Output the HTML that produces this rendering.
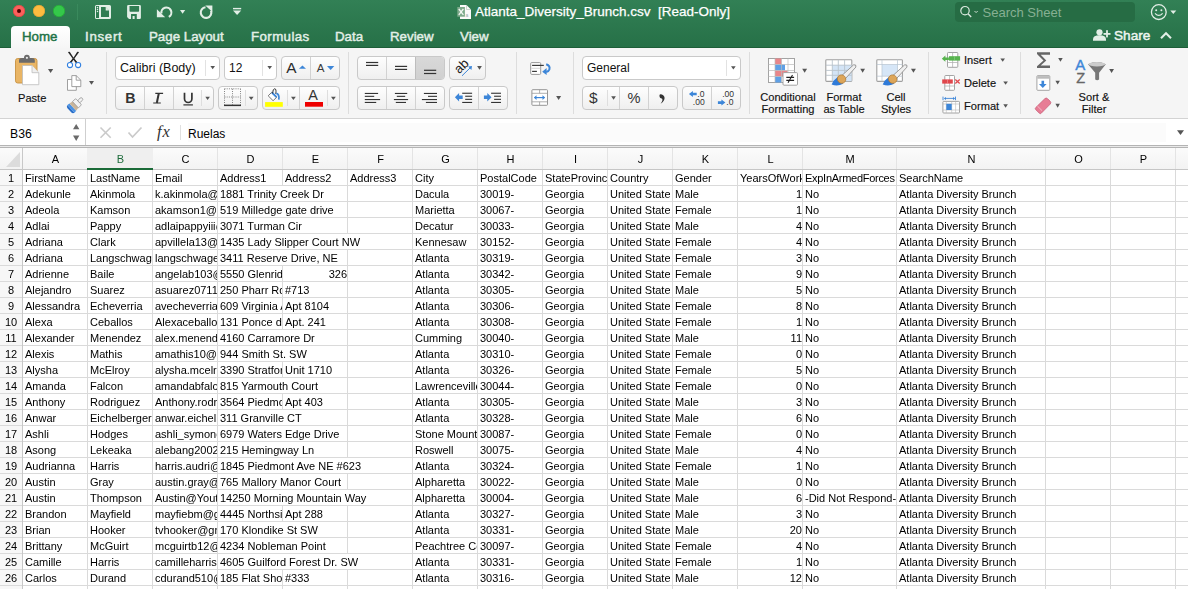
<!DOCTYPE html>
<html><head><meta charset="utf-8">
<style>
*{margin:0;padding:0;box-sizing:border-box}
html,body{width:1188px;height:589px;overflow:hidden;background:#fff;font-family:"Liberation Sans",sans-serif;position:relative}
.abs{position:absolute}
#grid{position:absolute;left:0;top:0;width:1188px;height:589px;will-change:transform}
.c{position:absolute;height:15px;line-height:15px;font-size:11px;color:#000;white-space:nowrap;overflow:hidden;padding-left:2px}
.c.n{text-align:right;padding-left:0;padding-right:0}
.vl{position:absolute;width:1px;background:#dadada}
.hl{position:absolute;left:0;width:1188px;height:1px;background:#dadada}
.rn{position:absolute;left:0;width:22px;height:15px;line-height:15px;font-size:11px;text-align:center;color:#000}
#rhbg{position:absolute;left:0;top:169px;width:22px;height:420px;background:#f7f7f7}
#chbg{position:absolute;left:0;top:148px;width:1188px;height:21px;background:linear-gradient(#fbfbfb,#f3f3f3)}
.ch{position:absolute;top:149px;height:21px;line-height:21px;padding-left:1px;font-size:11px;text-align:center;color:#000}
.ch.sel{color:#1d6b3b}
.chl{position:absolute;top:148px;width:1px;height:21px;background:#e4e4e4}
</style></head><body>
<style>
.tab{position:absolute;top:29px;font-size:13.3px;font-weight:normal;line-height:16px;color:#e3efe7;white-space:nowrap;-webkit-text-stroke:0.45px #e3efe7}
.grp{position:absolute;border:1px solid #c9c9c9;border-radius:4px;background:linear-gradient(#fefefe,#efefef)}
.inp{position:absolute;border:1px solid #c9c9c9;border-radius:4px;background:#fff}
.dv{position:absolute;width:1px;background:#d2d2d2}
.sep{position:absolute;width:1px;background:#dddddd}
.lbl{position:absolute;font-size:11.1px;line-height:11.8px;color:#111;white-space:nowrap;text-align:center;-webkit-text-stroke:0.15px #111}
#ov{position:absolute;left:0;top:0}
</style>
<div class="abs" style="left:0;top:0;width:1188px;height:48px;background:linear-gradient(rgb(50,128,85),rgb(38,112,71))"></div>
<div class="abs" style="left:0;top:47px;width:1188px;height:1px;background:#1d5e38"></div>
<div class="abs" style="left:13px;top:5px;width:12px;height:12px;border-radius:50%;background:#fc605c;box-shadow:inset 0 0 0 0.6px #d64541"></div>
<div class="abs" style="left:17px;top:9px;width:4px;height:4px;border-radius:50%;background:#4d0000"></div>
<div class="abs" style="left:33px;top:5px;width:12px;height:12px;border-radius:50%;background:#fdbc40;box-shadow:inset 0 0 0 0.6px #dc9e32"></div>
<div class="abs" style="left:53px;top:5px;width:12px;height:12px;border-radius:50%;background:#34c84a;box-shadow:inset 0 0 0 0.6px #26a534"></div>
<div class="abs" style="left:77px;top:4px;width:1px;height:16px;background:#3a8a5d"></div>
<div class="abs" style="left:475px;top:4px;font-size:13.5px;line-height:16px;color:#fff;white-space:pre;-webkit-text-stroke:0.25px #fff">Atlanta_Diversity_Brunch.csv  [Read-Only]</div>
<div class="abs" style="left:11px;top:26px;width:59px;height:22px;background:linear-gradient(#fff,#f6f6f6);border-radius:4px 4px 0 0"></div>
<div class="tab" style="left:22px;color:#217346;-webkit-text-stroke:0.45px #217346">Home</div>
<div class="tab" style="left:85px;letter-spacing:0.7px">Insert</div>
<div class="tab" style="left:149px">Page Layout</div>
<div class="tab" style="left:251px;letter-spacing:0.4px">Formulas</div>
<div class="tab" style="left:335px">Data</div>
<div class="tab" style="left:390px">Review</div>
<div class="tab" style="left:460px">View</div>
<div class="abs" style="left:955px;top:2px;width:180px;height:20px;border-radius:4px;background:#266c44"></div>
<div class="abs" style="left:982.5px;top:5px;font-size:13px;line-height:16px;color:#86b093">Search Sheet</div>
<div class="abs" style="left:1114px;top:28px;font-size:13.6px;line-height:16px;color:#eef5f0;-webkit-text-stroke:0.45px #eef5f0">Share</div>

<!-- ribbon body -->
<div class="abs" style="left:0;top:48px;width:1188px;height:70px;background:#f5f5f5"></div>
<div class="abs" style="left:0;top:118px;width:1188px;height:1px;background:#d3d3d3"></div>
<div class="sep" style="left:106px;top:52px;height:62px"></div>
<div class="sep" style="left:348px;top:52px;height:62px"></div>
<div class="sep" style="left:516px;top:52px;height:62px"></div>
<div class="sep" style="left:573px;top:52px;height:62px"></div>
<div class="sep" style="left:749px;top:52px;height:62px"></div>
<div class="sep" style="left:928px;top:52px;height:62px"></div>
<div class="sep" style="left:1020px;top:52px;height:62px"></div>
<div class="lbl" style="left:18px;top:92.5px">Paste</div>

<!-- font group -->
<div class="inp" style="left:115px;top:56px;width:105px;height:24px"></div>
<div class="dv" style="left:205px;top:60px;height:16px;background:#e2e2e2"></div>
<div class="abs" style="left:120px;top:60px;font-size:12.5px;line-height:16px;color:#111">Calibri (Body)</div>
<div class="inp" style="left:224px;top:56px;width:53px;height:24px"></div>
<div class="dv" style="left:262px;top:60px;height:16px;background:#e2e2e2"></div>
<div class="abs" style="left:229px;top:60px;font-size:12px;line-height:16px;color:#111">12</div>
<div class="grp" style="left:281px;top:56px;width:59px;height:24px"></div>
<div class="dv" style="left:310px;top:57px;height:22px"></div>
<div class="grp" style="left:115px;top:86px;width:99px;height:24px"></div>
<div class="dv" style="left:144px;top:87px;height:22px"></div>
<div class="dv" style="left:173px;top:87px;height:22px"></div>
<div class="dv" style="left:201px;top:90px;height:16px;background:#dedede"></div>
<div class="grp" style="left:218px;top:86px;width:40px;height:24px"></div>
<div class="dv" style="left:245px;top:90px;height:16px;background:#dedede"></div>
<div class="grp" style="left:262px;top:86px;width:78px;height:24px"></div>
<div class="dv" style="left:287px;top:90px;height:16px;background:#dedede"></div>
<div class="dv" style="left:299px;top:87px;height:22px"></div>
<div class="dv" style="left:327px;top:90px;height:16px;background:#dedede"></div>

<!-- alignment group -->
<div class="grp" style="left:357px;top:56px;width:88px;height:24px"></div>
<div class="abs" style="left:415px;top:57px;width:29px;height:22px;border-radius:0 3px 3px 0;background:linear-gradient(#d9d9d9,#d0d0d0)"></div>
<div class="dv" style="left:386px;top:57px;height:22px"></div>
<div class="dv" style="left:415px;top:57px;height:22px;background:#bdbdbd"></div>
<div class="grp" style="left:449px;top:56px;width:37px;height:24px"></div>
<div class="grp" style="left:357px;top:86px;width:88px;height:24px"></div>
<div class="dv" style="left:386px;top:87px;height:22px"></div>
<div class="dv" style="left:415px;top:87px;height:22px"></div>
<div class="grp" style="left:449px;top:86px;width:59px;height:24px"></div>
<div class="dv" style="left:478px;top:87px;height:22px"></div>

<!-- number group -->
<div class="inp" style="left:582px;top:56px;width:159px;height:24px"></div>
<div class="dv" style="left:726px;top:60px;height:16px;background:#e2e2e2"></div>
<div class="abs" style="left:587px;top:60px;font-size:12px;line-height:16px;color:#111">General</div>
<div class="grp" style="left:582px;top:86px;width:96px;height:24px"></div>
<div class="dv" style="left:607px;top:90px;height:16px;background:#dedede"></div>
<div class="dv" style="left:619px;top:87px;height:22px"></div>
<div class="dv" style="left:648px;top:87px;height:22px"></div>
<div class="grp" style="left:682px;top:86px;width:59px;height:24px"></div>
<div class="dv" style="left:711px;top:87px;height:22px"></div>

<!-- styles labels -->
<div class="lbl" style="left:747px;top:92px;width:82px">Conditional<br>Formatting</div>
<div class="lbl" style="left:814px;top:92px;width:60px">Format<br>as Table</div>
<div class="lbl" style="left:866px;top:92px;width:60px">Cell<br>Styles</div>
<div class="lbl" style="left:964px;top:55px;text-align:left">Insert</div>
<div class="lbl" style="left:964px;top:78px;text-align:left">Delete</div>
<div class="lbl" style="left:964px;top:101px;text-align:left">Format</div>
<div class="lbl" style="left:1064px;top:92px;width:60px">Sort &amp;<br>Filter</div>

<!-- formula bar -->
<div class="abs" style="left:0;top:119px;width:1188px;height:26px;background:#fff"></div>
<div class="abs" style="left:85px;top:119px;width:1px;height:26px;background:#cfcfcf"></div>
<div class="abs" style="left:188px;top:123px;width:978px;height:19px;background:#fbfbfb"></div>
<div class="abs" style="left:180px;top:125px;width:1px;height:15px;background:#e0e0e0"></div>
<div class="abs" style="left:0;top:145px;width:1188px;height:1px;background:#b4b4b4"></div>
<div class="abs" style="left:0;top:146px;width:1188px;height:1px;background:#e9e9e9"></div>
<div class="abs" style="left:0;top:147px;width:1188px;height:1px;background:#b4b4b4"></div>
<div class="abs" style="left:10px;top:126px;font-size:12.2px;line-height:16px;color:#000">B36</div>
<div class="abs" style="left:188px;top:126px;font-size:12px;line-height:16px;color:#000">Ruelas</div>
<svg id="ov" width="1188" height="148" viewBox="0 0 1188 148">
<!-- ===== title bar icons ===== -->
<g fill="#e2eee6">
 <!-- sidebar -->
 <path fill-rule="evenodd" d="M96.5,5 h13 a1.5,1.5 0 0 1 1.5,1.5 v11 a1.5,1.5 0 0 1 -1.5,1.5 h-13 a1.5,1.5 0 0 1 -1.5,-1.5 v-11 a1.5,1.5 0 0 1 1.5,-1.5z M96,6 v12 h3 v-12z M101,7 v10 h8 v-6.5 l-3.5,-3.5z"/>
 <path d="M105.7,7 v3.6 h3.3z"/>
 <circle cx="97.5" cy="7.6" r="0.75" fill="#e2eee6"/><circle cx="97.5" cy="9.6" r="0.75"/><circle cx="97.5" cy="11.6" r="0.75"/>
 <!-- save -->
 <path fill-rule="evenodd" d="M128.3,5 h11.4 a1.2,1.2 0 0 1 1.2,1.2 v11.6 a1.2,1.2 0 0 1 -1.2,1.2 h-10.7 l-1.9,-1.9 v-10.9 a1.2,1.2 0 0 1 1.2,-1.2z M129.5,6 v5 a0.8,0.8 0 0 0 0.8,0.8 h8 a0.8,0.8 0 0 0 0.8,-0.8 v-5z M131,14 v5 h5.8 v-5z"/>
 <rect x="132.6" y="16" width="2" height="3"/>
 <!-- undo -->
 <path d="M156.9,9.2 v8 h8.3z"/>
 <path fill="none" stroke="#e2eee6" stroke-width="2.1" d="M161.5,13.6 A5,5 0 1 1 168.8,16.9"/>
 <path d="M180,10 h5.2 l-2.6,3.8z"/>
 <!-- redo -->
 <path fill="none" stroke="#e2eee6" stroke-width="2.1" d="M205.5,7.3 A5.3,5.3 0 1 0 211,10.7"/>
 <path d="M205.3,5.6 h7.1 v6.4z"/>
 <!-- customize -->
 <rect x="233" y="7.9" width="8.2" height="1.4"/>
 <path d="M233,10.4 h8.2 l-4.1,4.6z"/>
 <!-- search magnifier -->
 <circle cx="965" cy="10.7" r="4.2" fill="none" stroke="#dbe9df" stroke-width="1.2"/>
 <path d="M968,13.8 l3.2,3.2" stroke="#dbe9df" stroke-width="1.4"/>
 <path d="M974.5,11 l1.6,1.6 l1.6,-1.6" fill="none" stroke="#dbe9df" stroke-width="0.9"/>
 <!-- smiley -->
 <circle cx="1158.8" cy="12.1" r="7.4" fill="none" stroke="#e2eee6" stroke-width="1.3"/>
 <circle cx="1156.2" cy="10.3" r="1"/><circle cx="1161.4" cy="10.3" r="1"/>
 <path d="M1155,13.3 q3.8,4.2 7.6,0" fill="none" stroke="#e2eee6" stroke-width="1.2"/>
 <path d="M1170.3,10.5 h6 l-3,3.5z"/>
 <!-- share person -->
 <circle cx="1099.5" cy="32.3" r="3.1"/>
 <path d="M1093,40.8 v-1.6 q0,-4 6.5,-4 q6.5,0 6.5,4 v1.6z"/>
 <rect x="1103.5" y="33" width="7" height="1.8"/><rect x="1106.1" y="30.2" width="1.8" height="7.2"/>
 <path d="M1161,38.2 L1166,33.2 L1171,38.2" fill="none" stroke="#e2eee6" stroke-width="2"/>
</g>
<!-- doc icon -->
<path d="M460,5 h6.5 l4.5,4.5 v9.5 h-11z" fill="#fafafa"/>
<path d="M466.5,5 v4.5 h4.5" fill="none" stroke="#b8c4bc" stroke-width="0.7"/>
<rect x="457.3" y="7" width="7.6" height="9.7" fill="#7daa8b"/>
<path d="M458.8,9 l4.6,5.8 M463.4,9 l-4.6,5.8" stroke="#f2f7f3" stroke-width="1.3"/>
<text x="465.6" y="16.5" font-size="5" fill="#9aa" font-family="Liberation Sans">a</text>

<!-- ===== clipboard ===== -->
<rect x="15.5" y="58.5" width="21.5" height="24.5" rx="2.2" fill="#e9b565" stroke="#c7913f" stroke-width="0.9"/>
<path d="M19,62.7 v-2.3 q0,-2.4 3,-2.4 h2 q0,-3.2 2.9,-3.2 q2.9,0 2.9,3.2 h2 q3,0 3,2.4 v2.3z" fill="#6b6b6b"/>
<circle cx="26.9" cy="57.8" r="1.1" fill="#e9e9e9"/>
<path d="M22.5,65.5 h9.5 l6.8,7.2 v12 h-16.3z" fill="#fff" stroke="#bdbdbd" stroke-width="0.8"/>
<path d="M32,65.5 v7.2 h6.8" fill="#f0f0f0" stroke="#bdbdbd" stroke-width="0.8"/>
<path d="M48,69 h5.2 l-2.6,4z" fill="#555"/>
<!-- scissors -->
<path d="M68.4,52.3 L69.5,52 Q72.5,57.5 77.1,62.3 L76.2,63z M78.6,52.3 L77.5,52 Q74.5,57.5 69.9,62.3 L70.8,63z" fill="#111" stroke="#111" stroke-width="0.6"/>
<circle cx="70" cy="65" r="2.6" fill="#fff" stroke="#2f7fe0" stroke-width="1.05"/>
<circle cx="78.1" cy="65" r="2.6" fill="#fff" stroke="#2f7fe0" stroke-width="1.05"/>
<!-- copy -->
<path d="M67.5,79.5 h5.5 v0 l0,0 h0 v0 h3.3 v10.8 h-8.8z" fill="#fff" stroke="#8f8f8f" stroke-width="0.85"/>
<path d="M71.8,75.6 h4.4 l4.6,4.6 v6.4 h-9z" fill="#fff" stroke="#8f8f8f" stroke-width="0.85"/>
<path d="M76.2,75.6 v4.6 h4.6" fill="none" stroke="#8f8f8f" stroke-width="0.85"/>
<path d="M89,81 h5 l-2.5,3.7z" fill="#555"/>
<!-- painter -->
<g transform="translate(70.6,109.2) rotate(47)">
 <path d="M-5.3,-0.6 L5.3,-0.6 q-0.6,2.2 -2.4,2.2 h-5.8 q-1.8,0 -2.4,-2.2z" fill="#2a6fc9"/>
 <path d="M-5.3,-0.6 L5.3,-0.6 L4.9,-3 L-4.9,-3z" fill="#4a92e4"/>
 <path d="M-4.9,-3 L4.9,-3 L4.3,-6.6 L-4.3,-6.6z" fill="#c9b59a"/>
 <path d="M-4.3,-6.6 h8.6 v-3.4 q0,-1 -1,-1 h-6.6 q-1,0 -1,1z" fill="#f3f3f3" stroke="#8c8c8c" stroke-width="0.7"/>
 <rect x="-1.6" y="-16" width="3.2" height="5.2" rx="1.6" fill="#f3f3f3" stroke="#8c8c8c" stroke-width="0.7"/>
</g>
<!-- ===== font group ===== -->
<g fill="#555">
 <path d="M210.4,66 h4.6 l-2.3,3.2z"/>
 <path d="M267.4,66 h4.6 l-2.3,3.2z"/>
 <path d="M205.3,96.7 h4.6 l-2.3,3.2z"/>
 <path d="M248.8,96.7 h4.8 l-2.4,3.2z"/>
 <path d="M291,96.7 h4.8 l-2.4,3.2z"/>
 <path d="M331,96.7 h4.8 l-2.4,3.2z"/>
</g>
<text x="286.2" y="73" font-size="15.4" fill="#2b2b2b" font-family="Liberation Sans">A</text>
<path d="M298.9,68.7 l3.55,-3.1 l3.55,3.1z" fill="#3d86d8"/>
<text x="316.7" y="71.8" font-size="11.6" fill="#3a3a3a" font-family="Liberation Sans">A</text>
<path d="M327,66 h7.3 l-3.65,4z" fill="#3d86d8"/>
<text x="125.2" y="103" font-size="14.2" font-weight="bold" fill="#333" font-family="Liberation Sans">B</text>
<path d="M155.3,93.3 h7.8 M153.2,103 h7.6" stroke="#333" stroke-width="1.2"/>
<path d="M158.8,93.3 L156.8,103" stroke="#333" stroke-width="2"/>
<path d="M184.5,92.8 v6 a3.7,3.7 0 0 0 7.4,0 v-6" fill="none" stroke="#333" stroke-width="1.7"/>
<rect x="183.4" y="104.3" width="9.5" height="1.2" fill="#333"/>
<!-- borders -->
<g fill="none" stroke="#777" stroke-width="0.9" stroke-dasharray="1,1.2">
 <path d="M224.5,88.8 h16 M224.5,88.8 v16 M240.5,88.8 v16 M224.5,97 h16 M232.5,88.8 v16"/>
</g>
<rect x="224" y="104.6" width="17" height="1.5" fill="#333"/>
<!-- fill color -->
<rect x="265.1" y="102.1" width="17.7" height="4.7" fill="#ffff00"/>
<path d="M268.2,95.8 L271.8,92.2 L276.8,97.1 L273.1,100.7z" fill="#fff" stroke="#666" stroke-width="0.9"/>
<path d="M271.9,92.5 L276.5,97.1" stroke="#3d86d8" stroke-width="1.8"/>
<path d="M272.6,93.4 q0.2,-4.8 2.2,-4.7 q1.7,0.2 1,5.3" fill="none" stroke="#222" stroke-width="0.9"/>
<path d="M276.3,93.3 q3.3,0.8 2.5,6.4" fill="none" stroke="#3d86d8" stroke-width="1.7"/>
<!-- font color -->
<text x="308.2" y="99.7" font-size="14.4" fill="#333" font-family="Liberation Sans">A</text>
<rect x="305" y="102" width="18" height="4.7" fill="#ee0000"/>

<!-- ===== alignment ===== -->
<g fill="#333">
 <rect x="366" y="61.9" width="12.2" height="1.2"/><rect x="366" y="64.8" width="12.2" height="1.2"/>
 <rect x="395" y="65.8" width="12.1" height="1.2"/><rect x="395" y="68.8" width="12.1" height="1.2"/>
 <rect x="424" y="69.7" width="12.2" height="1.2"/><rect x="424" y="72.9" width="12.2" height="1.2"/>
 <rect x="364.8" y="92.9" width="13.3" height="1.1"/><rect x="364.8" y="95.8" width="9.4" height="1.1"/><rect x="364.8" y="99" width="15.3" height="1.1"/><rect x="364.8" y="101.9" width="11.4" height="1.1"/>
 <rect x="394.9" y="92.9" width="12.3" height="1.1"/><rect x="396.8" y="95.8" width="8.4" height="1.1"/><rect x="393.9" y="99" width="14.2" height="1.1"/><rect x="395.8" y="101.9" width="10.2" height="1.1"/>
 <rect x="423.9" y="92.9" width="13.1" height="1.1"/><rect x="428" y="95.8" width="9" height="1.1"/><rect x="421.9" y="99" width="15.1" height="1.1"/><rect x="425.9" y="101.9" width="11.1" height="1.1"/>
</g>
<!-- orientation -->
<text x="0" y="0" font-size="13" fill="#222" font-family="Liberation Sans" transform="translate(459.3,74.3) rotate(-45)">ab</text>
<path d="M462,75.8 L470.6,67.4" stroke="#3d86d8" stroke-width="1"/>
<path d="M472,66 l-3.9,0.6 l3.3,3.3z" fill="#3d86d8"/>
<path d="M477.1,66.1 h4.8 l-2.4,3.6z" fill="#555"/>
<!-- indent -->
<path d="M454.9,97.2 l4.2,-4.3 v2.6 h3.6 v3.4 h-3.6 v2.6z" fill="#3d86d8"/>
<g fill="#333"><rect x="462.2" y="92.7" width="9.9" height="1.1"/><rect x="465.2" y="95.7" width="6.9" height="1.1"/><rect x="465.2" y="98.8" width="6.9" height="1.1"/><rect x="462.2" y="101.9" width="9.9" height="1.1"/></g>
<path d="M491.5,97.2 l-4.2,-4.3 v2.6 h-3.4 v3.4 h3.4 v2.6z" fill="#3d86d8"/>
<g fill="#333"><rect x="491.1" y="92.7" width="9.9" height="1.1"/><rect x="494.1" y="95.7" width="6.9" height="1.1"/><rect x="494.1" y="98.8" width="6.9" height="1.1"/><rect x="491.1" y="101.9" width="9.9" height="1.1"/></g>
<!-- wrap -->
<rect x="530.7" y="62.6" width="10" height="11.8" rx="1" fill="#fff" stroke="#999" stroke-width="1"/>
<rect x="531.2" y="67.8" width="9" height="0.9" fill="#cfcfcf"/>
<rect x="532.1" y="64.8" width="11.7" height="1.2" fill="#3a3a3a"/>
<rect x="532.1" y="70.8" width="4.8" height="1.2" fill="#3a3a3a"/>
<path d="M546.2,64.3 q4.2,1.6 3.2,5 q-0.8,2.2 -3.2,2.6" fill="none" stroke="#3d86d8" stroke-width="2"/>
<path d="M542.2,71.7 l4.4,-3.6 v7z" fill="#3d86d8"/>
<!-- merge -->
<rect x="531.9" y="89.7" width="15.6" height="15.6" rx="0.8" fill="#fff" stroke="#8a8a8a" stroke-width="0.9"/>
<path d="M531.9,93.3 h15.6 M531.9,101.8 h15.6 M539.6,89.7 v3.6 M539.6,101.8 v3.5" stroke="#9a9a9a" stroke-width="0.8"/>
<path d="M534.5,97.6 h10" stroke="#3d86d8" stroke-width="1.2"/>
<path d="M533.9,97.6 l2.6,-2.4 v4.8z M545.1,97.6 l-2.6,-2.4 v4.8z" fill="#3d86d8"/>
<path d="M556.1,95.9 h5 l-2.5,4z" fill="#555"/>

<!-- ===== number ===== -->
<path d="M731,66.2 h4.7 l-2.35,3.3z" fill="#555"/>
<path d="M611.2,96.3 h4.7 l-2.35,3.5z" fill="#555"/>
<text x="589" y="103.2" font-size="15.5" fill="#333" font-family="Liberation Sans">$</text>
<text x="627.4" y="103.4" font-size="14.6" fill="#333" font-family="Liberation Sans">%</text>
<path d="M660.4,94.2 C664.8,94.4 667,99.6 660.6,103.7 C663.2,100.2 662.8,98.7 661,98.2 C659.2,97.6 659,94.3 660.4,94.2Z" fill="#333"/>
<path d="M688.9,94 l4,-3 v1.7 h3.8 v2.6 h-3.8 v1.7z" fill="#3d86d8"/>
<text x="697.3" y="97" font-size="8.6" fill="#333" font-family="Liberation Sans">.0</text>
<text x="692.8" y="104.8" font-size="8.6" fill="#333" font-family="Liberation Sans">.00</text>
<text x="722.2" y="97" font-size="8.6" fill="#333" font-family="Liberation Sans">.00</text>
<path d="M725.4,102.6 l-4,-3 v1.7 h-3.5 v2.6 h3.5 v1.7z" fill="#3d86d8"/>
<text x="726.3" y="104.8" font-size="8.6" fill="#333" font-family="Liberation Sans">.0</text>

<!-- ===== styles ===== -->
<g>
 <rect x="768.5" y="58.5" width="26" height="24" fill="#fff" stroke="#9a9a9a" stroke-width="0.9"/>
 <rect x="775" y="58.5" width="6.5" height="6" fill="#e8868a"/>
 <rect x="775" y="64.5" width="10" height="6" fill="#5ea0e6"/>
 <rect x="775" y="70.5" width="12.6" height="6" fill="#e8868a"/>
 <rect x="775" y="76.5" width="6.5" height="6" fill="#5ea0e6"/>
 <path d="M775,58.5 v24 M781.5,58.5 v24 M788,58.5 v24 M768.5,64.5 h26 M768.5,70.5 h26 M768.5,76.5 h26" stroke="#bbb" stroke-width="0.7"/>
 <rect x="783" y="72.6" width="14.5" height="12.6" rx="1" fill="#fff" stroke="#9a9a9a" stroke-width="0.9"/>
 <path d="M786.3,77.4 h7.8 M786.3,80.4 h7.8 M792.5,75 L788,82.8" stroke="#222" stroke-width="1.1"/>
 <path d="M802.2,68.8 h4.9 l-2.45,4z" fill="#555"/>
</g>
<g>
 <rect x="825.8" y="59.8" width="26" height="21.6" rx="0.8" fill="#fff" stroke="#a0a0a0" stroke-width="1.1"/>
 <rect x="832.3" y="65.2" width="19.3" height="16" fill="#d3e4f6"/>
 <path d="M832.3,59.8 v21.6 M838.3,59.8 v21.6 M844.6,59.8 v21.6 M825.8,65.2 h26 M825.8,70.4 h26 M825.8,75.3 h26" stroke="#b9c3cc" stroke-width="0.9"/>
 <g transform="translate(841.6,79.1) rotate(45)">
  <path d="M-2.4,-2 L-1.6,-18.6 q1.6,-2.6 3.2,0 L2.4,-2z" fill="#efefef" stroke="#8a8a8a" stroke-width="0.8"/>
  <path d="M-4.3,1.2 Q-5.2,7 -3.3,10.8 Q2.5,8.5 4.4,2.2z" fill="#2f7ad8"/>
  <ellipse cx="0" cy="0" rx="4.3" ry="4.1" fill="#dda65a" stroke="#b27b32" stroke-width="0.7"/>
 </g>
 <path d="M860.3,68.8 h4.7 l-2.35,4z" fill="#555"/>
</g>
<g>
 <rect x="876.8" y="59.8" width="25.6" height="21.6" rx="0.8" fill="#fff" stroke="#a0a0a0" stroke-width="1.1"/>
 <rect x="882" y="64.5" width="15.5" height="11.7" fill="#d6e6f7"/>
 <path d="M882,59.5 v22 M897.5,59.5 v22 M876.5,64.5 h26 M876.5,76.2 h26" stroke="#b8c4d0" stroke-width="0.7"/>
 <g transform="translate(892.7,79.1) rotate(45)">
  <path d="M-2.4,-2 L-1.6,-18.6 q1.6,-2.6 3.2,0 L2.4,-2z" fill="#efefef" stroke="#8a8a8a" stroke-width="0.8"/>
  <path d="M-4.3,1.2 Q-5.2,7 -3.3,10.8 Q2.5,8.5 4.4,2.2z" fill="#2f7ad8"/>
  <ellipse cx="0" cy="0" rx="4.3" ry="4.1" fill="#dda65a" stroke="#b27b32" stroke-width="0.7"/>
 </g>
 <path d="M911,68.8 h4.9 l-2.45,4z" fill="#555"/>
</g>

<!-- ===== cells ===== -->
<g>
 <rect x="947.5" y="52.5" width="10.3" height="14.8" rx="0.8" fill="#fff" stroke="#9a9a9a" stroke-width="0.9"/>
 <path d="M952.6,52.5 v14.8 M947.5,62.5 h10.3" stroke="#aaa" stroke-width="0.7"/>
 <rect x="948.9" y="56.2" width="11.2" height="4.4" fill="#57b34e"/>
 <path d="M954.5,56.2 v4.4" stroke="#8fd08a" stroke-width="0.6"/>
 <path d="M941.8,58.7 l3.6,-3.1 v1.8 h3.5 v2.6 h-3.5 v1.8z" fill="#57b34e"/>
 <path d="M1000.4,58.4 h4.6 l-2.3,3.4z" fill="#555"/>
</g>
<g>
 <rect x="944.8" y="75.5" width="9.7" height="14.8" rx="0.8" fill="#fff" stroke="#9a9a9a" stroke-width="0.9"/>
 <path d="M949.6,75.5 v14.8 M944.8,86 h9.7" stroke="#aaa" stroke-width="0.7"/>
 <rect x="942.2" y="79.4" width="10.6" height="4.2" fill="#e0474c"/>
 <path d="M947.5,79.4 v4.2" stroke="#f09a9d" stroke-width="0.6"/>
 <path d="M955.3,79.6 l4.4,4 M959.7,79.6 l-4.4,4" stroke="#e0474c" stroke-width="1.3"/>
 <path d="M1003.3,81.4 h4.6 l-2.3,3.3z" fill="#555"/>
</g>
<g>
 <rect x="942.9" y="101.4" width="16.6" height="11.6" rx="0.8" fill="#fff" stroke="#9a9a9a" stroke-width="0.9"/>
 <path d="M946.3,101.4 v11.6 M951.7,101.4 v11.6 M955.6,101.4 v11.6 M942.9,104 h16.6 M942.9,110 h16.6" stroke="#bbb" stroke-width="0.6"/>
 <rect x="946.3" y="103.8" width="5.4" height="6.2" fill="#3d86d8"/>
 <path d="M944.5,98.4 h10" stroke="#3d86d8" stroke-width="0.9"/>
 <path d="M943,96.6 v3.6 M955.5,96.6 v3.6" stroke="#3d86d8" stroke-width="0.9"/>
 <path d="M944,98.4 l2,-1.5 v3z M955,98.4 l-2,-1.5 v3z" fill="#3d86d8"/>
 <path d="M1003.3,104.3 h4.6 l-2.3,3.4z" fill="#555"/>
</g>

<!-- ===== editing ===== -->
<path d="M1037,52.2 h13 v2.5 h-9.3 l5.6,5.9 l-5.6,5 h9.3 v2.3 h-13 v-1.7 l6.5,-5.6 l-6.5,-6.6z" fill="#666"/>
<path d="M1058.2,58 h4.5 l-2.25,3.8z" fill="#555"/>
<rect x="1036.9" y="75.7" width="12.9" height="14.6" rx="0.8" fill="#fff" stroke="#9a9a9a" stroke-width="0.9"/>
<rect x="1037.3" y="76.1" width="12.1" height="2.6" fill="#bbb"/>
<path d="M1041.5,80.8 h2.6 v3.3 h2.5 l-3.8,3.9 l-3.8,-3.9 h2.5z" fill="#3d86d8"/>
<path d="M1055.4,80.8 h4.5 l-2.25,3.7z" fill="#555"/>
<path d="M1035.8,107.5 l9,-8.8 a2,2 0 0 1 2.8,0 l2.6,2.6 a2,2 0 0 1 0,2.8 l-8.8,9 a1.5,1.5 0 0 1 -2.2,0 l-3.4,-3.4 a1.5,1.5 0 0 1 0,-2.2z" fill="#e77d95" stroke="#c45470" stroke-width="0.7"/>
<path d="M1037.4,106 l4.6,4.6" stroke="#f5c2cf" stroke-width="0.9"/>
<path d="M1055.4,103.8 h4.5 l-2.25,3.9z" fill="#555"/>
<text x="1075.2" y="69.6" font-size="15" fill="#3d86d8" font-family="Liberation Sans" stroke="#3d86d8" stroke-width="0.4">A</text>
<text x="1076.3" y="82.5" font-size="14.6" fill="#666" font-family="Liberation Sans" stroke="#666" stroke-width="0.3">Z</text>
<path d="M1088,64.3 q8.9,-4.5 17.8,0 l-6.7,8.5 v6.8 q-1.9,1.2 -3.9,0 v-6.8z" fill="#777"/>
<ellipse cx="1096.9" cy="64.2" rx="8.4" ry="2.2" fill="#ccc"/>
<path d="M1109.2,69 h4.8 l-2.4,4z" fill="#555"/>

<!-- ===== formula bar ===== -->
<path d="M73,129.3 l3.2,-5.4 l3.2,5.4z M73,135.6 h6.4 l-3.2,5.4z" fill="#6a6a6a"/>
<path d="M100.5,127.5 l10.2,10.2 M110.7,127.5 l-10.2,10.2" stroke="#cacaca" stroke-width="1.6"/>
<path d="M128.5,132.5 l4,4.5 l9,-9.5" fill="none" stroke="#cacaca" stroke-width="1.7"/>
<text x="157" y="137.2" font-size="16.5" font-style="italic" fill="#333" font-family="Liberation Serif" letter-spacing="0.8">fx</text>
<path d="M1177,130.2 h7 l-3.5,4.8z" fill="#555"/>
</svg>

<div id="grid">
<div id="chbg"></div>
<div id="rhbg"></div>
<div class="vl" style="left:22px;top:169px;height:432px"></div><div class="vl" style="left:87px;top:169px;height:432px"></div><div class="vl" style="left:152px;top:169px;height:432px"></div><div class="vl" style="left:217px;top:169px;height:432px"></div><div class="vl" style="left:282px;top:169px;height:16px"></div><div class="vl" style="left:282px;top:265px;height:64px"></div><div class="vl" style="left:282px;top:361px;height:16px"></div><div class="vl" style="left:282px;top:393px;height:16px"></div><div class="vl" style="left:282px;top:505px;height:16px"></div><div class="vl" style="left:282px;top:569px;height:32px"></div><div class="vl" style="left:347px;top:169px;height:64px"></div><div class="vl" style="left:347px;top:249px;height:208px"></div><div class="vl" style="left:347px;top:473px;height:16px"></div><div class="vl" style="left:347px;top:505px;height:48px"></div><div class="vl" style="left:347px;top:569px;height:32px"></div><div class="vl" style="left:412px;top:169px;height:432px"></div><div class="vl" style="left:477px;top:169px;height:432px"></div><div class="vl" style="left:542px;top:169px;height:432px"></div><div class="vl" style="left:607px;top:169px;height:432px"></div><div class="vl" style="left:672px;top:169px;height:432px"></div><div class="vl" style="left:737px;top:169px;height:432px"></div><div class="vl" style="left:802px;top:169px;height:432px"></div><div class="vl" style="left:896px;top:169px;height:432px"></div><div class="vl" style="left:1045px;top:169px;height:432px"></div><div class="vl" style="left:1110px;top:169px;height:432px"></div><div class="vl" style="left:1175px;top:169px;height:432px"></div><div class="hl" style="top:185px"></div><div class="hl" style="top:201px"></div><div class="hl" style="top:217px"></div><div class="hl" style="top:233px"></div><div class="hl" style="top:249px"></div><div class="hl" style="top:265px"></div><div class="hl" style="top:281px"></div><div class="hl" style="top:297px"></div><div class="hl" style="top:313px"></div><div class="hl" style="top:329px"></div><div class="hl" style="top:345px"></div><div class="hl" style="top:361px"></div><div class="hl" style="top:377px"></div><div class="hl" style="top:393px"></div><div class="hl" style="top:409px"></div><div class="hl" style="top:425px"></div><div class="hl" style="top:441px"></div><div class="hl" style="top:457px"></div><div class="hl" style="top:473px"></div><div class="hl" style="top:489px"></div><div class="hl" style="top:505px"></div><div class="hl" style="top:521px"></div><div class="hl" style="top:537px"></div><div class="hl" style="top:553px"></div><div class="hl" style="top:569px"></div><div class="hl" style="top:585px"></div><div class="hl" style="top:601px"></div>
<div class="abs" style="left:0;top:169px;width:1188px;height:1px;background:#c6c6c6"></div>
<div class="abs" style="left:22px;top:148px;width:1px;height:441px;background:#c8c8c8"></div>
<div class="chl" style="left:87px"></div><div class="ch" style="left:23px;width:64px">A</div><div class="chl" style="left:152px"></div><div class="abs" style="left:87px;top:148px;width:66px;height:22px;background:#efefef;border-bottom:2px solid #1b6b38"></div><div class="ch sel" style="left:88px;width:64px">B</div><div class="chl" style="left:217px"></div><div class="ch" style="left:153px;width:64px">C</div><div class="chl" style="left:282px"></div><div class="ch" style="left:218px;width:64px">D</div><div class="chl" style="left:347px"></div><div class="ch" style="left:283px;width:64px">E</div><div class="chl" style="left:412px"></div><div class="ch" style="left:348px;width:64px">F</div><div class="chl" style="left:477px"></div><div class="ch" style="left:413px;width:64px">G</div><div class="chl" style="left:542px"></div><div class="ch" style="left:478px;width:64px">H</div><div class="chl" style="left:607px"></div><div class="ch" style="left:543px;width:64px">I</div><div class="chl" style="left:672px"></div><div class="ch" style="left:608px;width:64px">J</div><div class="chl" style="left:737px"></div><div class="ch" style="left:673px;width:64px">K</div><div class="chl" style="left:802px"></div><div class="ch" style="left:738px;width:64px">L</div><div class="chl" style="left:896px"></div><div class="ch" style="left:803px;width:93px">M</div><div class="chl" style="left:1045px"></div><div class="ch" style="left:897px;width:148px">N</div><div class="chl" style="left:1110px"></div><div class="ch" style="left:1046px;width:64px">O</div><div class="chl" style="left:1175px"></div><div class="ch" style="left:1111px;width:64px">P</div><div class="chl" style="left:1240px"></div><div class="ch" style="left:1176px;width:64px">Q</div>
<div class="rn" style="top:171px">1</div><div class="rn" style="top:187px">2</div><div class="rn" style="top:203px">3</div><div class="rn" style="top:219px">4</div><div class="rn" style="top:235px">5</div><div class="rn" style="top:251px">6</div><div class="rn" style="top:267px">7</div><div class="rn" style="top:283px">8</div><div class="rn" style="top:299px">9</div><div class="rn" style="top:315px">10</div><div class="rn" style="top:331px">11</div><div class="rn" style="top:347px">12</div><div class="rn" style="top:363px">13</div><div class="rn" style="top:379px">14</div><div class="rn" style="top:395px">15</div><div class="rn" style="top:411px">16</div><div class="rn" style="top:427px">17</div><div class="rn" style="top:443px">18</div><div class="rn" style="top:459px">19</div><div class="rn" style="top:475px">20</div><div class="rn" style="top:491px">21</div><div class="rn" style="top:507px">22</div><div class="rn" style="top:523px">23</div><div class="rn" style="top:539px">24</div><div class="rn" style="top:555px">25</div><div class="rn" style="top:571px">26</div><div class="rn" style="top:587px">27</div>
<div class="c" style="left:23px;top:171px;width:64px">FirstName</div><div class="c" style="left:88px;top:171px;width:64px">LastName</div><div class="c" style="left:153px;top:171px;width:64px">Email</div><div class="c" style="left:218px;top:171px;width:64px">Address1</div><div class="c" style="left:283px;top:171px;width:64px">Address2</div><div class="c" style="left:348px;top:171px;width:64px">Address3</div><div class="c" style="left:413px;top:171px;width:64px">City</div><div class="c" style="left:478px;top:171px;width:64px">PostalCode</div><div class="c" style="left:543px;top:171px;width:64px">StateProvince</div><div class="c" style="left:608px;top:171px;width:64px">Country</div><div class="c" style="left:673px;top:171px;width:64px">Gender</div><div class="c" style="left:738px;top:171px;width:64px">YearsOfWork</div><div class="c" style="left:803px;top:171px;width:93px;letter-spacing:-0.28px">ExpInArmedForces</div><div class="c" style="left:897px;top:171px;width:148px">SearchName</div><div class="c" style="left:23px;top:187px;width:64px">Adekunle</div><div class="c" style="left:88px;top:187px;width:64px">Akinmola</div><div class="c" style="left:153px;top:187px;width:64px">k.akinmola@gmail.com</div><div class="c" style="left:218px;top:187px;width:129px">1881 Trinity Creek Dr</div><div class="c" style="left:413px;top:187px;width:64px">Dacula</div><div class="c" style="left:478px;top:187px;width:64px">30019-</div><div class="c" style="left:543px;top:187px;width:64px">Georgia</div><div class="c" style="left:608px;top:187px;width:62px">United States</div><div class="c" style="left:673px;top:187px;width:64px">Male</div><div class="c n" style="left:738px;top:187px;width:64px">1</div><div class="c" style="left:803px;top:187px;width:93px">No</div><div class="c" style="left:897px;top:187px;width:148px">Atlanta Diversity Brunch</div><div class="c" style="left:23px;top:203px;width:64px">Adeola</div><div class="c" style="left:88px;top:203px;width:64px">Kamson</div><div class="c" style="left:153px;top:203px;width:64px">akamson1@yahoo.com</div><div class="c" style="left:218px;top:203px;width:129px">519 Milledge gate drive</div><div class="c" style="left:413px;top:203px;width:64px">Marietta</div><div class="c" style="left:478px;top:203px;width:64px">30067-</div><div class="c" style="left:543px;top:203px;width:64px">Georgia</div><div class="c" style="left:608px;top:203px;width:62px">United States</div><div class="c" style="left:673px;top:203px;width:64px">Female</div><div class="c n" style="left:738px;top:203px;width:64px">1</div><div class="c" style="left:803px;top:203px;width:93px">No</div><div class="c" style="left:897px;top:203px;width:148px">Atlanta Diversity Brunch</div><div class="c" style="left:23px;top:219px;width:64px">Adlai</div><div class="c" style="left:88px;top:219px;width:64px">Pappy</div><div class="c" style="left:153px;top:219px;width:64px">adlaipappyiii@gmail.com</div><div class="c" style="left:218px;top:219px;width:129px">3071 Turman Cir</div><div class="c" style="left:413px;top:219px;width:64px">Decatur</div><div class="c" style="left:478px;top:219px;width:64px">30033-</div><div class="c" style="left:543px;top:219px;width:64px">Georgia</div><div class="c" style="left:608px;top:219px;width:62px">United States</div><div class="c" style="left:673px;top:219px;width:64px">Male</div><div class="c n" style="left:738px;top:219px;width:64px">4</div><div class="c" style="left:803px;top:219px;width:93px">No</div><div class="c" style="left:897px;top:219px;width:148px">Atlanta Diversity Brunch</div><div class="c" style="left:23px;top:235px;width:64px">Adriana</div><div class="c" style="left:88px;top:235px;width:64px">Clark</div><div class="c" style="left:153px;top:235px;width:64px">apvillela13@gmail.com</div><div class="c" style="left:218px;top:235px;width:194px">1435 Lady Slipper Court NW</div><div class="c" style="left:413px;top:235px;width:64px">Kennesaw</div><div class="c" style="left:478px;top:235px;width:64px">30152-</div><div class="c" style="left:543px;top:235px;width:64px">Georgia</div><div class="c" style="left:608px;top:235px;width:62px">United States</div><div class="c" style="left:673px;top:235px;width:64px">Female</div><div class="c n" style="left:738px;top:235px;width:64px">4</div><div class="c" style="left:803px;top:235px;width:93px">No</div><div class="c" style="left:897px;top:235px;width:148px">Atlanta Diversity Brunch</div><div class="c" style="left:23px;top:251px;width:64px">Adriana</div><div class="c" style="left:88px;top:251px;width:64px">Langschwager</div><div class="c" style="left:153px;top:251px;width:64px">langschwager@gmail.com</div><div class="c" style="left:218px;top:251px;width:129px">3411 Reserve Drive, NE</div><div class="c" style="left:413px;top:251px;width:64px">Atlanta</div><div class="c" style="left:478px;top:251px;width:64px">30319-</div><div class="c" style="left:543px;top:251px;width:64px">Georgia</div><div class="c" style="left:608px;top:251px;width:62px">United States</div><div class="c" style="left:673px;top:251px;width:64px">Female</div><div class="c n" style="left:738px;top:251px;width:64px">3</div><div class="c" style="left:803px;top:251px;width:93px">No</div><div class="c" style="left:897px;top:251px;width:148px">Atlanta Diversity Brunch</div><div class="c" style="left:23px;top:267px;width:64px">Adrienne</div><div class="c" style="left:88px;top:267px;width:64px">Baile</div><div class="c" style="left:153px;top:267px;width:64px">angelab103@gmail.com</div><div class="c" style="left:218px;top:267px;width:64px">5550 Glenridge Dr</div><div class="c n" style="left:283px;top:267px;width:64px">326</div><div class="c" style="left:413px;top:267px;width:64px">Atlanta</div><div class="c" style="left:478px;top:267px;width:64px">30342-</div><div class="c" style="left:543px;top:267px;width:64px">Georgia</div><div class="c" style="left:608px;top:267px;width:62px">United States</div><div class="c" style="left:673px;top:267px;width:64px">Female</div><div class="c n" style="left:738px;top:267px;width:64px">9</div><div class="c" style="left:803px;top:267px;width:93px">No</div><div class="c" style="left:897px;top:267px;width:148px">Atlanta Diversity Brunch</div><div class="c" style="left:23px;top:283px;width:64px">Alejandro</div><div class="c" style="left:88px;top:283px;width:64px">Suarez</div><div class="c" style="left:153px;top:283px;width:64px">asuarez0711@gmail.com</div><div class="c" style="left:218px;top:283px;width:64px">250 Pharr Rd NE</div><div class="c" style="left:283px;top:283px;width:64px">#713</div><div class="c" style="left:413px;top:283px;width:64px">Atlanta</div><div class="c" style="left:478px;top:283px;width:64px">30305-</div><div class="c" style="left:543px;top:283px;width:64px">Georgia</div><div class="c" style="left:608px;top:283px;width:62px">United States</div><div class="c" style="left:673px;top:283px;width:64px">Male</div><div class="c n" style="left:738px;top:283px;width:64px">5</div><div class="c" style="left:803px;top:283px;width:93px">No</div><div class="c" style="left:897px;top:283px;width:148px">Atlanta Diversity Brunch</div><div class="c" style="left:23px;top:299px;width:64px">Alessandra</div><div class="c" style="left:88px;top:299px;width:64px">Echeverria</div><div class="c" style="left:153px;top:299px;width:64px">avecheverria@gmail.com</div><div class="c" style="left:218px;top:299px;width:64px">609 Virginia Ave</div><div class="c" style="left:283px;top:299px;width:64px">Apt 8104</div><div class="c" style="left:413px;top:299px;width:64px">Atlanta</div><div class="c" style="left:478px;top:299px;width:64px">30306-</div><div class="c" style="left:543px;top:299px;width:64px">Georgia</div><div class="c" style="left:608px;top:299px;width:62px">United States</div><div class="c" style="left:673px;top:299px;width:64px">Female</div><div class="c n" style="left:738px;top:299px;width:64px">8</div><div class="c" style="left:803px;top:299px;width:93px">No</div><div class="c" style="left:897px;top:299px;width:148px">Atlanta Diversity Brunch</div><div class="c" style="left:23px;top:315px;width:64px">Alexa</div><div class="c" style="left:88px;top:315px;width:64px">Ceballos</div><div class="c" style="left:153px;top:315px;width:64px">Alexaceballos@gmail.com</div><div class="c" style="left:218px;top:315px;width:64px">131 Ponce de Leon</div><div class="c" style="left:283px;top:315px;width:64px">Apt. 241</div><div class="c" style="left:413px;top:315px;width:64px">Atlanta</div><div class="c" style="left:478px;top:315px;width:64px">30308-</div><div class="c" style="left:543px;top:315px;width:64px">Georgia</div><div class="c" style="left:608px;top:315px;width:62px">United States</div><div class="c" style="left:673px;top:315px;width:64px">Female</div><div class="c n" style="left:738px;top:315px;width:64px">1</div><div class="c" style="left:803px;top:315px;width:93px">No</div><div class="c" style="left:897px;top:315px;width:148px">Atlanta Diversity Brunch</div><div class="c" style="left:23px;top:331px;width:64px">Alexander</div><div class="c" style="left:88px;top:331px;width:64px">Menendez</div><div class="c" style="left:153px;top:331px;width:64px">alex.menendez@gmail.com</div><div class="c" style="left:218px;top:331px;width:129px">4160 Carramore Dr</div><div class="c" style="left:413px;top:331px;width:64px">Cumming</div><div class="c" style="left:478px;top:331px;width:64px">30040-</div><div class="c" style="left:543px;top:331px;width:64px">Georgia</div><div class="c" style="left:608px;top:331px;width:62px">United States</div><div class="c" style="left:673px;top:331px;width:64px">Male</div><div class="c n" style="left:738px;top:331px;width:64px">11</div><div class="c" style="left:803px;top:331px;width:93px">No</div><div class="c" style="left:897px;top:331px;width:148px">Atlanta Diversity Brunch</div><div class="c" style="left:23px;top:347px;width:64px">Alexis</div><div class="c" style="left:88px;top:347px;width:64px">Mathis</div><div class="c" style="left:153px;top:347px;width:64px">amathis10@gmail.com</div><div class="c" style="left:218px;top:347px;width:129px">944 Smith St. SW</div><div class="c" style="left:413px;top:347px;width:64px">Atlanta</div><div class="c" style="left:478px;top:347px;width:64px">30310-</div><div class="c" style="left:543px;top:347px;width:64px">Georgia</div><div class="c" style="left:608px;top:347px;width:62px">United States</div><div class="c" style="left:673px;top:347px;width:64px">Female</div><div class="c n" style="left:738px;top:347px;width:64px">0</div><div class="c" style="left:803px;top:347px;width:93px">No</div><div class="c" style="left:897px;top:347px;width:148px">Atlanta Diversity Brunch</div><div class="c" style="left:23px;top:363px;width:64px">Alysha</div><div class="c" style="left:88px;top:363px;width:64px">McElroy</div><div class="c" style="left:153px;top:363px;width:64px">alysha.mcelroy@gmail.com</div><div class="c" style="left:218px;top:363px;width:64px">3390 Stratford Rd</div><div class="c" style="left:283px;top:363px;width:64px">Unit 1710</div><div class="c" style="left:413px;top:363px;width:64px">Atlanta</div><div class="c" style="left:478px;top:363px;width:64px">30326-</div><div class="c" style="left:543px;top:363px;width:64px">Georgia</div><div class="c" style="left:608px;top:363px;width:62px">United States</div><div class="c" style="left:673px;top:363px;width:64px">Female</div><div class="c n" style="left:738px;top:363px;width:64px">5</div><div class="c" style="left:803px;top:363px;width:93px">No</div><div class="c" style="left:897px;top:363px;width:148px">Atlanta Diversity Brunch</div><div class="c" style="left:23px;top:379px;width:64px">Amanda</div><div class="c" style="left:88px;top:379px;width:64px">Falcon</div><div class="c" style="left:153px;top:379px;width:64px">amandabfalcon@gmail.com</div><div class="c" style="left:218px;top:379px;width:129px">815 Yarmouth Court</div><div class="c" style="left:413px;top:379px;width:64px">Lawrenceville</div><div class="c" style="left:478px;top:379px;width:64px">30044-</div><div class="c" style="left:543px;top:379px;width:64px">Georgia</div><div class="c" style="left:608px;top:379px;width:62px">United States</div><div class="c" style="left:673px;top:379px;width:64px">Female</div><div class="c n" style="left:738px;top:379px;width:64px">0</div><div class="c" style="left:803px;top:379px;width:93px">No</div><div class="c" style="left:897px;top:379px;width:148px">Atlanta Diversity Brunch</div><div class="c" style="left:23px;top:395px;width:64px">Anthony</div><div class="c" style="left:88px;top:395px;width:64px">Rodriguez</div><div class="c" style="left:153px;top:395px;width:64px">Anthony.rodriguez@gmail.com</div><div class="c" style="left:218px;top:395px;width:64px">3564 Piedmont Rd</div><div class="c" style="left:283px;top:395px;width:64px">Apt 403</div><div class="c" style="left:413px;top:395px;width:64px">Atlanta</div><div class="c" style="left:478px;top:395px;width:64px">30305-</div><div class="c" style="left:543px;top:395px;width:64px">Georgia</div><div class="c" style="left:608px;top:395px;width:62px">United States</div><div class="c" style="left:673px;top:395px;width:64px">Male</div><div class="c n" style="left:738px;top:395px;width:64px">3</div><div class="c" style="left:803px;top:395px;width:93px">No</div><div class="c" style="left:897px;top:395px;width:148px">Atlanta Diversity Brunch</div><div class="c" style="left:23px;top:411px;width:64px">Anwar</div><div class="c" style="left:88px;top:411px;width:64px">Eichelberger</div><div class="c" style="left:153px;top:411px;width:64px">anwar.eichelberger@gmail.com</div><div class="c" style="left:218px;top:411px;width:129px">311 Granville CT</div><div class="c" style="left:413px;top:411px;width:64px">Atlanta</div><div class="c" style="left:478px;top:411px;width:64px">30328-</div><div class="c" style="left:543px;top:411px;width:64px">Georgia</div><div class="c" style="left:608px;top:411px;width:62px">United States</div><div class="c" style="left:673px;top:411px;width:64px">Male</div><div class="c n" style="left:738px;top:411px;width:64px">6</div><div class="c" style="left:803px;top:411px;width:93px">No</div><div class="c" style="left:897px;top:411px;width:148px">Atlanta Diversity Brunch</div><div class="c" style="left:23px;top:427px;width:64px">Ashli</div><div class="c" style="left:88px;top:427px;width:64px">Hodges</div><div class="c" style="left:153px;top:427px;width:64px">ashli_symonds@gmail.com</div><div class="c" style="left:218px;top:427px;width:129px">6979 Waters Edge Drive</div><div class="c" style="left:413px;top:427px;width:64px">Stone Mountain</div><div class="c" style="left:478px;top:427px;width:64px">30087-</div><div class="c" style="left:543px;top:427px;width:64px">Georgia</div><div class="c" style="left:608px;top:427px;width:62px">United States</div><div class="c" style="left:673px;top:427px;width:64px">Female</div><div class="c n" style="left:738px;top:427px;width:64px">0</div><div class="c" style="left:803px;top:427px;width:93px">No</div><div class="c" style="left:897px;top:427px;width:148px">Atlanta Diversity Brunch</div><div class="c" style="left:23px;top:443px;width:64px">Asong</div><div class="c" style="left:88px;top:443px;width:64px">Lekeaka</div><div class="c" style="left:153px;top:443px;width:64px">alebang2002@yahoo.com</div><div class="c" style="left:218px;top:443px;width:129px">215 Hemingway Ln</div><div class="c" style="left:413px;top:443px;width:64px">Roswell</div><div class="c" style="left:478px;top:443px;width:64px">30075-</div><div class="c" style="left:543px;top:443px;width:64px">Georgia</div><div class="c" style="left:608px;top:443px;width:62px">United States</div><div class="c" style="left:673px;top:443px;width:64px">Male</div><div class="c n" style="left:738px;top:443px;width:64px">4</div><div class="c" style="left:803px;top:443px;width:93px">No</div><div class="c" style="left:897px;top:443px;width:148px">Atlanta Diversity Brunch</div><div class="c" style="left:23px;top:459px;width:64px">Audrianna</div><div class="c" style="left:88px;top:459px;width:64px">Harris</div><div class="c" style="left:153px;top:459px;width:64px">harris.audri@gmail.com</div><div class="c" style="left:218px;top:459px;width:194px">1845 Piedmont Ave NE #623</div><div class="c" style="left:413px;top:459px;width:64px">Atlanta</div><div class="c" style="left:478px;top:459px;width:64px">30324-</div><div class="c" style="left:543px;top:459px;width:64px">Georgia</div><div class="c" style="left:608px;top:459px;width:62px">United States</div><div class="c" style="left:673px;top:459px;width:64px">Female</div><div class="c n" style="left:738px;top:459px;width:64px">1</div><div class="c" style="left:803px;top:459px;width:93px">No</div><div class="c" style="left:897px;top:459px;width:148px">Atlanta Diversity Brunch</div><div class="c" style="left:23px;top:475px;width:64px">Austin</div><div class="c" style="left:88px;top:475px;width:64px">Gray</div><div class="c" style="left:153px;top:475px;width:64px">austin.gray@gmail.com</div><div class="c" style="left:218px;top:475px;width:129px">765 Mallory Manor Court</div><div class="c" style="left:413px;top:475px;width:64px">Alpharetta</div><div class="c" style="left:478px;top:475px;width:64px">30022-</div><div class="c" style="left:543px;top:475px;width:64px">Georgia</div><div class="c" style="left:608px;top:475px;width:62px">United States</div><div class="c" style="left:673px;top:475px;width:64px">Male</div><div class="c n" style="left:738px;top:475px;width:64px">0</div><div class="c" style="left:803px;top:475px;width:93px">No</div><div class="c" style="left:897px;top:475px;width:148px">Atlanta Diversity Brunch</div><div class="c" style="left:23px;top:491px;width:64px">Austin</div><div class="c" style="left:88px;top:491px;width:64px">Thompson</div><div class="c" style="left:153px;top:491px;width:64px">Austin@YouthBuild.org</div><div class="c" style="left:218px;top:491px;width:194px">14250 Morning Mountain Way</div><div class="c" style="left:413px;top:491px;width:64px">Alpharetta</div><div class="c" style="left:478px;top:491px;width:64px">30004-</div><div class="c" style="left:543px;top:491px;width:64px">Georgia</div><div class="c" style="left:608px;top:491px;width:62px">United States</div><div class="c" style="left:673px;top:491px;width:64px">Male</div><div class="c n" style="left:738px;top:491px;width:64px">6</div><div class="c" style="left:803px;top:491px;width:93px">-Did Not Respond-</div><div class="c" style="left:897px;top:491px;width:148px">Atlanta Diversity Brunch</div><div class="c" style="left:23px;top:507px;width:64px">Brandon</div><div class="c" style="left:88px;top:507px;width:64px">Mayfield</div><div class="c" style="left:153px;top:507px;width:64px">mayfiebm@gmail.com</div><div class="c" style="left:218px;top:507px;width:64px">4445 Northside Pkwy</div><div class="c" style="left:283px;top:507px;width:64px">Apt 288</div><div class="c" style="left:413px;top:507px;width:64px">Atlanta</div><div class="c" style="left:478px;top:507px;width:64px">30327-</div><div class="c" style="left:543px;top:507px;width:64px">Georgia</div><div class="c" style="left:608px;top:507px;width:62px">United States</div><div class="c" style="left:673px;top:507px;width:64px">Male</div><div class="c n" style="left:738px;top:507px;width:64px">3</div><div class="c" style="left:803px;top:507px;width:93px">No</div><div class="c" style="left:897px;top:507px;width:148px">Atlanta Diversity Brunch</div><div class="c" style="left:23px;top:523px;width:64px">Brian</div><div class="c" style="left:88px;top:523px;width:64px">Hooker</div><div class="c" style="left:153px;top:523px;width:64px">tvhooker@gmail.com</div><div class="c" style="left:218px;top:523px;width:129px">170 Klondike St SW</div><div class="c" style="left:413px;top:523px;width:64px">Atlanta</div><div class="c" style="left:478px;top:523px;width:64px">30331-</div><div class="c" style="left:543px;top:523px;width:64px">Georgia</div><div class="c" style="left:608px;top:523px;width:62px">United States</div><div class="c" style="left:673px;top:523px;width:64px">Male</div><div class="c n" style="left:738px;top:523px;width:64px">20</div><div class="c" style="left:803px;top:523px;width:93px">No</div><div class="c" style="left:897px;top:523px;width:148px">Atlanta Diversity Brunch</div><div class="c" style="left:23px;top:539px;width:64px">Brittany</div><div class="c" style="left:88px;top:539px;width:64px">McGuirt</div><div class="c" style="left:153px;top:539px;width:64px">mcguirtb12@gmail.com</div><div class="c" style="left:218px;top:539px;width:129px">4234 Nobleman Point</div><div class="c" style="left:413px;top:539px;width:64px">Peachtree Corners</div><div class="c" style="left:478px;top:539px;width:64px">30097-</div><div class="c" style="left:543px;top:539px;width:64px">Georgia</div><div class="c" style="left:608px;top:539px;width:62px">United States</div><div class="c" style="left:673px;top:539px;width:64px">Female</div><div class="c n" style="left:738px;top:539px;width:64px">4</div><div class="c" style="left:803px;top:539px;width:93px">No</div><div class="c" style="left:897px;top:539px;width:148px">Atlanta Diversity Brunch</div><div class="c" style="left:23px;top:555px;width:64px">Camille</div><div class="c" style="left:88px;top:555px;width:64px">Harris</div><div class="c" style="left:153px;top:555px;width:64px">camilleharris@gmail.com</div><div class="c" style="left:218px;top:555px;width:194px">4605 Guilford Forest Dr. SW</div><div class="c" style="left:413px;top:555px;width:64px">Atlanta</div><div class="c" style="left:478px;top:555px;width:64px">30331-</div><div class="c" style="left:543px;top:555px;width:64px">Georgia</div><div class="c" style="left:608px;top:555px;width:62px">United States</div><div class="c" style="left:673px;top:555px;width:64px">Female</div><div class="c n" style="left:738px;top:555px;width:64px">1</div><div class="c" style="left:803px;top:555px;width:93px">No</div><div class="c" style="left:897px;top:555px;width:148px">Atlanta Diversity Brunch</div><div class="c" style="left:23px;top:571px;width:64px">Carlos</div><div class="c" style="left:88px;top:571px;width:64px">Durand</div><div class="c" style="left:153px;top:571px;width:64px">cdurand510@gmail.com</div><div class="c" style="left:218px;top:571px;width:64px">185 Flat Shoals Rd</div><div class="c" style="left:283px;top:571px;width:64px">#333</div><div class="c" style="left:413px;top:571px;width:64px">Atlanta</div><div class="c" style="left:478px;top:571px;width:64px">30316-</div><div class="c" style="left:543px;top:571px;width:64px">Georgia</div><div class="c" style="left:608px;top:571px;width:62px">United States</div><div class="c" style="left:673px;top:571px;width:64px">Male</div><div class="c n" style="left:738px;top:571px;width:64px">12</div><div class="c" style="left:803px;top:571px;width:93px">No</div><div class="c" style="left:897px;top:571px;width:148px">Atlanta Diversity Brunch</div>
<svg class="abs" style="left:0;top:148px" width="22" height="21"><polygon points="6,19 20,19 20,4" fill="#dcdcdc"/></svg>
</div>
</body></html>
